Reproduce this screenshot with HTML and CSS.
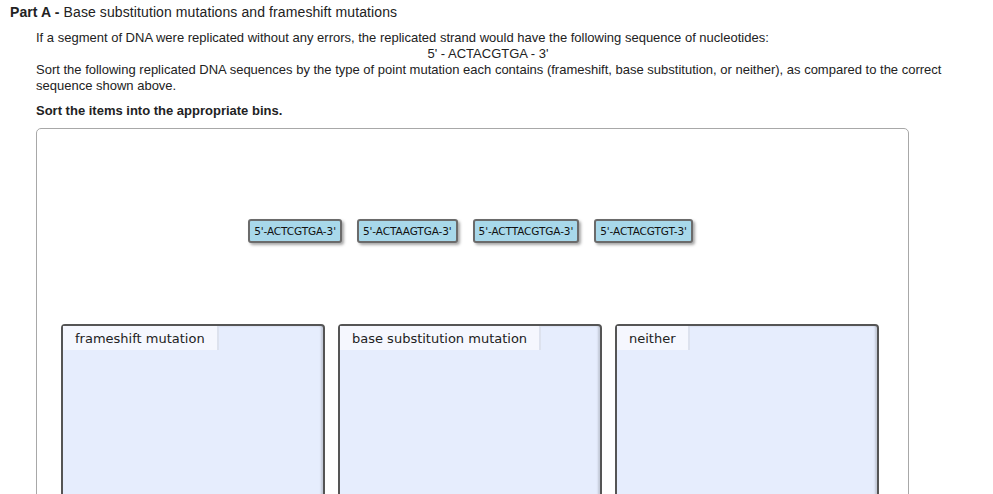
FILE: index.html
```html
<!DOCTYPE html>
<html>
<head>
<meta charset="utf-8">
<link rel="stylesheet" href="styles.css">
</head>
<body>
<h1 class="part-title"><b>Part A -</b> Base substitution mutations and frameshift mutations</h1>
<div class="content">
  <p class="intro">If a segment of DNA were replicated without any errors, the replicated strand would have the following sequence of nucleotides:</p>
  <p class="seq">5' - ACTACGTGA - 3'</p>
  <p class="intro">Sort the following replicated DNA sequences by the type of point mutation each contains (frameshift, base substitution, or neither), as compared to the correct sequence shown above.</p>
  <p class="instr">Sort the items into the appropriate bins.</p>
  <div class="board">
    <div class="chips">
      <div class="chip">5'-ACTCGTGA-3'</div>
      <div class="chip">5'-ACTAAGTGA-3'</div>
      <div class="chip">5'-ACTTACGTGA-3'</div>
      <div class="chip">5'-ACTACGTGT-3'</div>
    </div>
    <div class="bins">
      <div class="bin"><div class="bin-label">frameshift mutation</div></div>
      <div class="bin"><div class="bin-label">base substitution mutation</div></div>
      <div class="bin"><div class="bin-label">neither</div></div>
    </div>
  </div>
</div>
</body>
</html>
```

FILE: styles.css
```css
html, body {
  margin: 0;
  padding: 0;
  background: #fff;
  overflow: hidden;
}
body {
  font-family: "Liberation Sans", Arial, sans-serif;
  color: #222;
  height: 494px;
}
.part-title {
  font-size: 14px;
  font-weight: normal;
  margin: 0;
  padding: 4px 0 0 10px;
  line-height: 16px;
  color: #222;
  letter-spacing: 0.1px;
}
.part-title b {
  font-weight: bold;
}
.content {
  margin-left: 36px;
  width: 920px;
  padding-top: 10px;
}
.intro {
  font-size: 13px;
  line-height: 16px;
  margin: 0;
}
.seq {
  font-size: 13px;
  line-height: 16px;
  margin: 0;
  text-align: center;
  padding-right: 16px;
}
.instr {
  font-size: 13px;
  font-weight: bold;
  line-height: 16px;
  margin: 9px 0 0 0;
}
.board {
  margin-top: 9px;
  width: 873px;
  height: 400px;
  border: 1px solid #a8a8a8;
  border-radius: 5px;
  box-sizing: border-box;
}
.chips {
  display: flex;
  justify-content: center;
  gap: 15px;
  padding-top: 90px;
  padding-right: 4px;
}
.chip {
  font-family: "DejaVu Sans", Verdana, sans-serif;
  font-size: 10.5px;
  line-height: 20px;
  padding: 0 4px;
  background: #a8d8ea;
  border: 2px solid #6b6b6b;
  border-radius: 3px;
  color: #111;
  box-shadow: 2px 2px 3px rgba(0,0,0,0.35);
  letter-spacing: -0.1px;
}
.bins {
  display: flex;
  gap: 13px;
  padding-left: 24px;
  margin-top: 81px;
}
.bin {
  width: 264px;
  height: 200px;
  box-sizing: border-box;
  border: 2px solid #555;
  border-radius: 4px;
  background: #e6edfd;
  box-shadow: inset -2px 0 2px rgba(0,0,0,0.15);
}
.bin-label {
  display: inline-block;
  font-family: "DejaVu Sans", Verdana, sans-serif;
  font-size: 13px;
  line-height: 22px;
  padding: 2px 12px 0 12px;
  background: #f5f7fe;
  color: #222;
  border-right: 2px solid #dde2ee;
}
```
